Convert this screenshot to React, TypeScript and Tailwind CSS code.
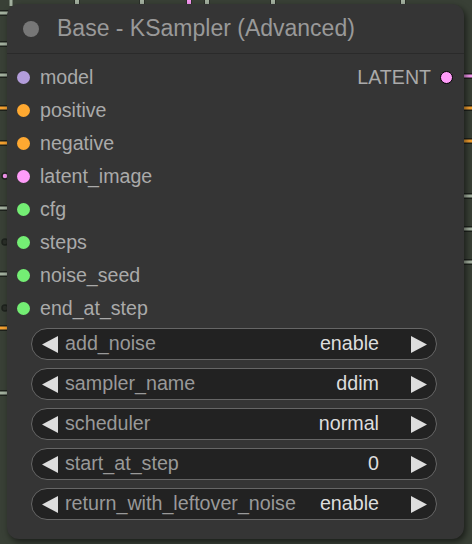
import { ReactNode } from "react";

type Slot = { name: string; color: string };

const inputs: Slot[] = [
  { name: "model", color: "#b39ddb" },
  { name: "positive", color: "#ffa931" },
  { name: "negative", color: "#ffa931" },
  { name: "latent_image", color: "#ff9cf9" },
  { name: "cfg", color: "#74ee74" },
  { name: "steps", color: "#74ee74" },
  { name: "noise_seed", color: "#74ee74" },
  { name: "end_at_step", color: "#74ee74" },
];

const widgets = [
  { label: "add_noise", value: "enable" },
  { label: "sampler_name", value: "ddim" },
  { label: "scheduler", value: "normal" },
  { label: "start_at_step", value: "0" },
  { label: "return_with_leftover_noise", value: "enable" },
];

const GRAY = "#a3b09f";
const ORANGE = "#f3a030";
const PINK = "#f596ef";

// wire ends peeking out from behind the node
const leftWires = [
  { y: 13, c: GRAY },
  { y: 44, c: GRAY },
  { y: 75, c: GRAY },
  { y: 108, c: ORANGE },
  { y: 143, c: ORANGE },
  { y: 208, c: GRAY },
  { y: 274, c: GRAY },
  { y: 328, c: ORANGE },
  { y: 393, c: GRAY },
];
const leftDots = [
  { y: 176, c: PINK },
  { y: 242, c: "#2a2f28" },
  { y: 308, c: "#2a2f28" },
];
const rightWires = [
  { y: 76, c: PINK },
  { y: 108, c: ORANGE },
  { y: 141, c: ORANGE },
  { y: 196, c: GRAY },
  { y: 229, c: GRAY },
  { y: 262, c: GRAY },
];
const topWires = [
  { x: 77, c: GRAY },
  { x: 142, c: GRAY },
  { x: 189, c: PINK },
  { x: 207, c: GRAY },
  { x: 273, c: GRAY },
  { x: 403, c: GRAY },
];

function Wires() {
  return (
    <svg className="absolute inset-0" width={472} height={544}>
      {leftWires.map((w, i) => (
        <g key={`l${i}`}>
          <line x1={0} y1={w.y} x2={14} y2={w.y} stroke="#1e221d" strokeWidth={6} />
          <line x1={0} y1={w.y} x2={14} y2={w.y} stroke={w.c} strokeWidth={3} />
        </g>
      ))}
      {leftDots.map((d, i) => (
        <circle key={`d${i}`} cx={5} cy={d.y} r={3} fill={d.c} stroke="#1e221d" strokeWidth={1.5} />
      ))}
      {rightWires.map((w, i) => (
        <g key={`r${i}`}>
          <line x1={455} y1={w.y} x2={472} y2={w.y} stroke="#1e221d" strokeWidth={6} />
          <line x1={455} y1={w.y} x2={472} y2={w.y} stroke={w.c} strokeWidth={3} />
        </g>
      ))}
      {topWires.map((w, i) => (
        <g key={`t${i}`}>
          <line x1={w.x} y1={0} x2={w.x} y2={12} stroke="#2a2f28" strokeWidth={6} />
          <line x1={w.x} y1={0} x2={w.x} y2={12} stroke={w.c} strokeWidth={4} />
        </g>
      ))}
      <path d="M 11 0 L 11 6" stroke={GRAY} strokeWidth={3} />
    </svg>
  );
}

function Arrow({ dir }: { dir: "left" | "right" }) {
  return (
    <svg width={16} height={17} viewBox="0 0 16 17" className="shrink-0">
      {dir === "left" ? (
        <polygon points="16,0 16,17 0,8.5" fill="#dddddd" />
      ) : (
        <polygon points="0,0 0,17 16,8.5" fill="#dddddd" />
      )}
    </svg>
  );
}

function Widget({ label, value }: { label: string; value: string }) {
  return (
    <div className="flex h-[32px] w-[406px] items-center rounded-full border border-[#666666] bg-[#222222] pl-[10px] pr-[9px]">
      <Arrow dir="left" />
      <span className="ml-[7px] flex-1 truncate text-[#999999]">{label}</span>
      <span className="text-[#dddddd]">{value}</span>
      <span className="ml-[32px]">
        <Arrow dir="right" />
      </span>
    </div>
  );
}

function Dot({ color, outlined }: { color: string; outlined?: boolean }): ReactNode {
  return (
    <span
      className={`block h-[13px] w-[13px] rounded-full ${outlined ? "border-[1.5px] border-black" : ""}`}
      style={{ backgroundColor: color }}
    />
  );
}

export default function App() {
  return (
    <div
      className="relative h-[544px] w-[472px] overflow-hidden bg-[#394036] font-['Liberation_Sans',Arial,sans-serif]"
    >
      <Wires />
      <div className="relative ml-[7px] mt-[4px] flex h-[535px] w-[457px] flex-col rounded-[12px] bg-[#353535] shadow-[2px_3px_6px_rgba(0,0,0,0.55)]">
        <div className="flex h-[50px] items-center border-b border-[#2a2a2a] pl-[16px]">
          <span className="block h-[16px] w-[16px] rounded-full bg-[#777777]" />
          <span className="ml-[18px] text-[23px] text-[#999999]">Base - KSampler (Advanced)</span>
        </div>
        <div className="flex flex-col pt-[7px] text-[19.6px] text-[#aaaaaa]">
          {inputs.map((s, i) => (
            <div key={s.name} className="flex h-[33px] items-center pl-[10px]">
              <Dot color={s.color} />
              <span className="ml-[10px] flex-1">{s.name}</span>
              {i === 0 && (
                <span className="flex items-center pr-[11px]">
                  <span>LATENT</span>
                  <span className="ml-[9px]">
                    <Dot color="#ff9cf9" outlined />
                  </span>
                </span>
              )}
            </div>
          ))}
        </div>
        <div className="ml-[24px] mt-[3px] flex flex-col gap-[8px] text-[19.7px]">
          {widgets.map((w) => (
            <Widget key={w.label} {...w} />
          ))}
        </div>
      </div>
    </div>
  );
}
